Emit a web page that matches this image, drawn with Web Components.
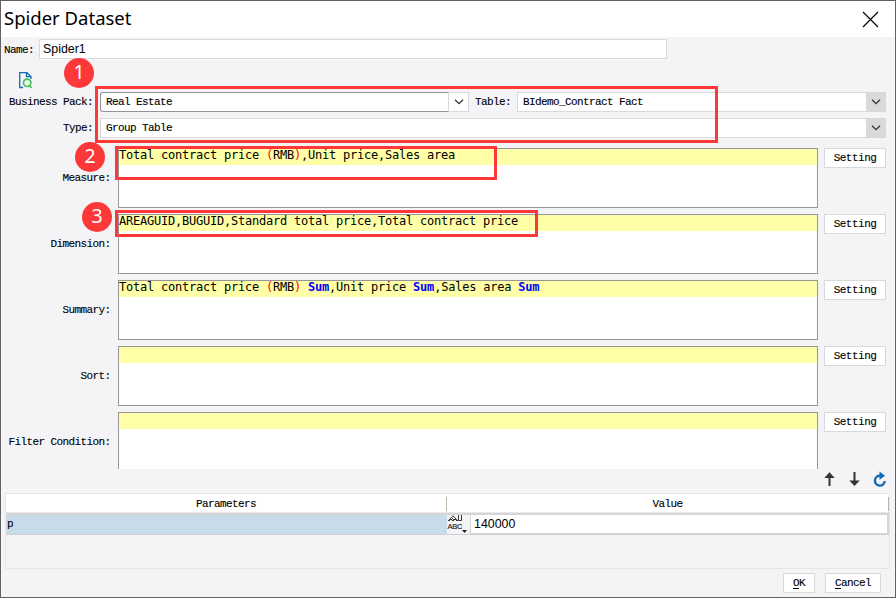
<!DOCTYPE html>
<html lang="en"><head><meta charset="utf-8"><title>Spider Dataset</title>
<style>
html,body{margin:0;width:896px;height:598px;overflow:hidden;background:#f4f4f7}
body{--line:#d9d9dc;--mono:"Liberation Mono",monospace;font:11px/14px var(--mono);letter-spacing:-.6px;color:#000;-webkit-text-stroke:.12px currentColor}
</style></head><body>
<spider-dialog>
 <form-label slot="name" style="padding-top:1px">Name:</form-label>
 <text-field slot="name">Spider1</text-field>
 <form-label slot="pack" style="width:91px">Business Pack:</form-label>
 <combo-box slot="pack" focused style="width:369px">Real Estate</combo-box>
 <form-label slot="pack" style="width:36px;padding-right:0">Table:</form-label>
 <combo-box slot="pack" filled style="width:369px">BIdemo_Contract Fact</combo-box>
 <form-label slot="type" style="width:91px">Type:</form-label>
 <combo-box slot="type" filled style="width:786px">Group Table</combo-box>
 <code-row slot="rows" label="Measure:">Total contract price <i>(</i>RMB<i>)</i>,Unit price,Sales area</code-row>
 <code-row slot="rows" label="Dimension:">AREAGUID,BUGUID,Standard total price,Total contract price</code-row>
 <code-row slot="rows" label="Summary:">Total contract price <i>(</i>RMB<i>)</i> <b>Sum</b>,Unit price <b>Sum</b>,Sales area <b>Sum</b></code-row>
 <code-row slot="rows" label="Sort:"></code-row>
 <code-row slot="rows" label="Filter Condition:"></code-row>
 <param-table slot="table"></param-table>
 <push-button slot="actions" style="width:32px"><u>O</u>K</push-button>
 <push-button slot="actions" style="width:56px"><u>C</u>ancel</push-button>
 <mark-box slot="marks" style="left:94px;top:85px;width:623px;height:57px"></mark-box>
 <mark-box slot="marks" style="left:114px;top:145px;width:382px;height:34px"></mark-box>
 <mark-box slot="marks" style="left:114px;top:209px;width:423px;height:27px"></mark-box>
 <mark-dot slot="marks" style="left:63px;top:57px">1</mark-dot>
 <mark-dot slot="marks" style="left:74px;top:141px">2</mark-dot>
 <mark-dot slot="marks" style="left:81px;top:201px">3</mark-dot>
</spider-dialog>
<script>
const define=(name,html,setup)=>customElements.define(name,class extends HTMLElement{
  constructor(){super();this.attachShadow({mode:'open'}).innerHTML=html;}
  connectedCallback(){if(setup)setup(this,this.shadowRoot);}
});
define('form-label',`<style>:host{display:block;box-sizing:border-box;text-align:right;white-space:nowrap;flex:none;padding-right:1px}</style><slot></slot>`);
define('text-field',`<style>:host{display:block;box-sizing:border-box;width:628px;height:20px;border:1px solid var(--line);background:#fff;padding-left:3px;font:12.4px/18px "Liberation Sans",sans-serif;letter-spacing:0;-webkit-text-stroke:0}</style><slot></slot>`);
define('combo-box',`<style>
:host{display:flex;height:20px;flex:none}
.v{flex:1;box-sizing:border-box;border:1px solid var(--line);background:#fff;padding-left:5px;line-height:19px}
.a{box-sizing:border-box;width:20px;border:1px solid var(--line);border-left:0;background:#fff;display:grid;place-items:center}
:host([focused]) .v{border-color:#949496;border-right-color:var(--line);border-radius:3px 0 0 3px}
:host([filled]) .a{background:var(--line)}
:host([filled]) .v{border-right:0}
svg{fill:none;stroke:#333;stroke-width:1.3}
</style><div class="v"><slot></slot></div><div class="a"><svg width="10" height="6"><path d="M1 .7 5 4.7 9 .7"/></svg></div>`);
define('push-button',`<style>:host{display:grid;place-items:center;box-sizing:border-box;height:20px;border:1px solid var(--line);background:#fff;flex:none}
span{white-space:nowrap}::slotted(u){text-underline-offset:2px}</style><span><slot></slot></span>`);
define('code-row',`<style>
:host{display:flex;gap:6px;height:60px;flex:none}
.l{width:111px;display:flex;align-items:center;justify-content:flex-end;flex:none;box-sizing:border-box;padding:0 1.500px 0 0}
.e{box-sizing:border-box;width:700px;border:1px solid #969698;background:#fff;flex:none}
.c{height:16px;background:#ffffa8;font:12px/13px "DejaVu Sans Mono",monospace;letter-spacing:-.224px;white-space:pre;-webkit-text-stroke:0}
::slotted(i){font-style:normal;color:#f00}::slotted(b){color:#00f}
</style><div class="l"></div><div class="e"><div class="c"><slot></slot></div></div><push-button style="width:62px;letter-spacing:-.5px">Setting</push-button>`,
(el,r)=>r.querySelector('.l').textContent=el.getAttribute('label'));
define('param-table',`<style>
:host{display:block;box-sizing:border-box;height:76px;border:1px solid #e6e6e8}
.h{height:18px;background:#fff;display:grid;grid-template-columns:441px 1fr;align-items:center;text-align:center;border-bottom:1px solid #e9e9eb}
.h div{height:14px;line-height:14px;border-right:1px solid #bdb8a8;margin-top:2px}
.r{box-sizing:border-box;height:22px;border-top:2px solid #d4d5d7;border-bottom:1px solid #cfd0d2;display:flex}
.p{width:441px;background:#c8dbe9;line-height:19px;text-indent:1px}
.t{width:23px;display:block}
.t text{font:7.500px "Liberation Sans",sans-serif;letter-spacing:0;fill:#222}
.v{flex:1;box-sizing:border-box;background:#fff;border:1px solid #d4d5d7;border-top:0;border-right-width:2px;padding-left:3px;font:12.4px/18px "Liberation Sans",sans-serif;letter-spacing:0;-webkit-text-stroke:0}
</style><div class="h"><div>Parameters</div><div>Value</div></div>
<div class="r"><div class="p">p</div><svg class="t" width="23" height="19" fill="none" stroke="#333"><path d="M1 6 6 .8 11 6M2 6l2-2 2 2 2-2 2 2M5 3l2 2M11.500 0v5.500h3V0" stroke-width="1"/><text x="0.500" y="14" textLength="15" stroke="#222" stroke-width=".2">ABC</text><path d="M15 15h5l-2.500 3z" fill="#222" stroke="none"/></svg><div class="v">140000</div></div>`);
define('mark-box',`<style>:host{position:absolute;box-sizing:border-box;border:3px solid #fd3838}</style>`);
define('mark-dot',`<style>:host{position:absolute;width:30px;height:30px;border-radius:50%;background:#fd3838;color:#fff;text-align:center;font:19.5px/28px "Noto Sans",sans-serif;letter-spacing:0;-webkit-text-stroke:0}</style><slot></slot>`);
define('spider-dialog',`<style>
:host{display:flex;flex-direction:column;position:relative;box-sizing:border-box;width:896px;height:598px;border:1px solid #626264;background:#f4f4f7;overflow:hidden}
header{height:36px;background:#fff;display:flex;justify-content:space-between;align-items:center;padding:0 16px 0 3px;box-sizing:border-box;flex:none}
h1{margin:0;padding-bottom:2px;font:18.5px/34px "Noto Sans",sans-serif;letter-spacing:0;-webkit-text-stroke:0}
svg{display:block;fill:none}
.row{display:flex;align-items:center;height:20px;flex:none}
.name{margin-top:2px;padding-left:3px;gap:4px}
.icon{height:33px;padding:13px 0 0 17px;box-sizing:border-box}
.pack,.type{gap:6px;padding-left:2px;margin-bottom:6px}
.type{margin-bottom:10px}
.rows{display:flex;flex-direction:column;gap:6px;height:321px;overflow:hidden;flex:none}
.tools{display:flex;gap:14px;justify-content:flex-end;padding:3px 8px 0 0;height:24px;box-sizing:border-box;flex:none}
.table{padding:0 5px 0 4px}
.actions{display:flex;gap:10px;justify-content:flex-end;padding:4px 14px 0 0}
</style>
<header><h1>Spider Dataset</h1><svg width="17" height="17" stroke="#000" stroke-width="1.2"><path d="M1 1 16 16M16 1 1 16"/></svg></header>
<div class="row name"><slot name="name"></slot></div>
<div class="icon"><svg width="16" height="18" stroke-width="1.3"><path d="M5 15.500H1.700V.7H9l4 4V7M8.500 .7V4.700H13" stroke="#1669b0"/><circle cx="9.200" cy="10.800" r="3.700" stroke="#3fc257" stroke-width="1.600"/><path d="m11 13 2.600 3" stroke="#3fc257" stroke-width="1.600"/></svg></div>
<div class="row pack"><slot name="pack"></slot></div>
<div class="row type"><slot name="type"></slot></div>
<div class="rows"><slot name="rows"></slot></div>
<div class="tools">
<svg width="11" height="15"><path d="M5.500 14V3" stroke="#333" stroke-width="2"/><path d="M.3 6 5.500.3l5.200 5.700z" fill="#333"/></svg>
<svg width="11" height="15"><path d="M5.500 0v11" stroke="#333" stroke-width="2"/><path d="M.3 8.500 5.500 14l5.200-5.500z" fill="#333"/></svg>
<svg width="13" height="16" overflow="visible"><path d="M7 3.800H5.400a4.900 4.900 0 1 0 5.300 5.200" stroke="#1169b1" stroke-width="2.400"/><path d="M5.500-.5l5.500 4.300-5.500 4z" fill="#1169b1"/></svg>
</div>
<div class="table"><slot name="table"></slot></div>
<div class="actions"><slot name="actions"></slot></div>
<slot name="marks"></slot>`);
</script></body></html>
